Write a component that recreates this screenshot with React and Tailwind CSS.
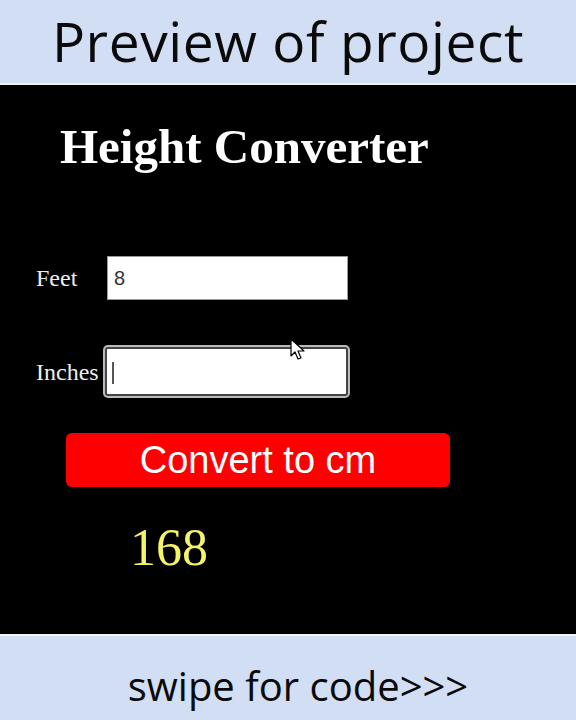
import React, { useState } from 'react';

// Little mouse pointer drawn over the inches field
const Pointer = () => (
  <svg width="18" height="24" viewBox="0 0 18 24" className="absolute left-[290px] top-[253px]">
    <path d="M1 1 L1 18 L5 14 L8 21 L11 20 L8 13 L14 13 Z" fill="#fff" stroke="#000" strokeWidth="1.2" strokeLinejoin="round" />
  </svg>
);

const App = () => {
  const [feet, setFeet] = useState('8');
  const [inches, setInches] = useState('');
  const [result, setResult] = useState('168');

  const convert = () => {
    const cm = (Number(feet) || 0) * 30.48 + (Number(inches) || 0) * 2.54;
    setResult(String(Math.round(cm)));
  };

  return (
    <div className="w-[576px] h-[720px] flex flex-col bg-[#d2def3] overflow-hidden">
      {/* Top banner */}
      <div className="h-[85px] shrink-0 flex justify-center border-b-2 border-[#eef2fa]">
        <h2 className="text-[55px] leading-normal tracking-[0.6px] text-[#0a0a0a] font-['Open_Sans',sans-serif]">Preview of project</h2>
      </div>

      {/* Converter page */}
      <div className="relative h-[549px] shrink-0 bg-black flex flex-col font-['Liberation_Serif',serif]">
        <h1 className="mt-[37px] ml-[60px] text-[49px] leading-none font-bold text-white">Height Converter</h1>

        <div className="mt-[85px] ml-[36px] flex items-center">
          <label className="w-[71px] text-[24px] text-[#eee]">Feet</label>
          <input
            value={feet}
            onChange={(e) => setFeet(e.target.value)}
            className="w-[241px] h-[44px] px-[6px] bg-white border border-[#999] text-[20px] text-[#333] outline-none font-['Liberation_Sans',sans-serif]"
          />
        </div>

        <div className="mt-[47px] ml-[36px] flex items-center">
          <label className="w-[69px] text-[24px] text-[#eee]">Inches</label>
          <input
            value={inches}
            onChange={(e) => setInches(e.target.value)}
            className="w-[243px] h-[49px] px-[6px] bg-white border-2 border-[#444] rounded-[3px] ring-2 ring-[#bbb] text-[20px] text-[#333] outline-none font-['Liberation_Sans',sans-serif]"
          />
        </div>
        {/* text caret in the focused field */}
        <div className="absolute left-[112px] top-[277px] w-[2px] h-[22px] bg-[#555]" />

        <button
          onClick={convert}
          className="mt-[37px] ml-[66px] w-[384px] h-[54px] bg-[#ff0000] rounded-[6px] text-white text-[38px] leading-none font-['Liberation_Sans',sans-serif]"
        >
          Convert to cm
        </button>

        <div className="mt-[35px] ml-[130px] text-[52px] leading-none text-[#f4f46a]">{result}</div>

        <Pointer />
      </div>

      {/* Bottom banner */}
      <div className="flex-1 border-t-2 border-[#eef2fa] flex items-end justify-center pb-[14px]">
        <span className="ml-[20px] text-[40px] leading-none text-[#0a0a0a] font-['Open_Sans',sans-serif]">swipe for code&gt;&gt;&gt;</span>
      </div>
    </div>
  );
};

export default App;
